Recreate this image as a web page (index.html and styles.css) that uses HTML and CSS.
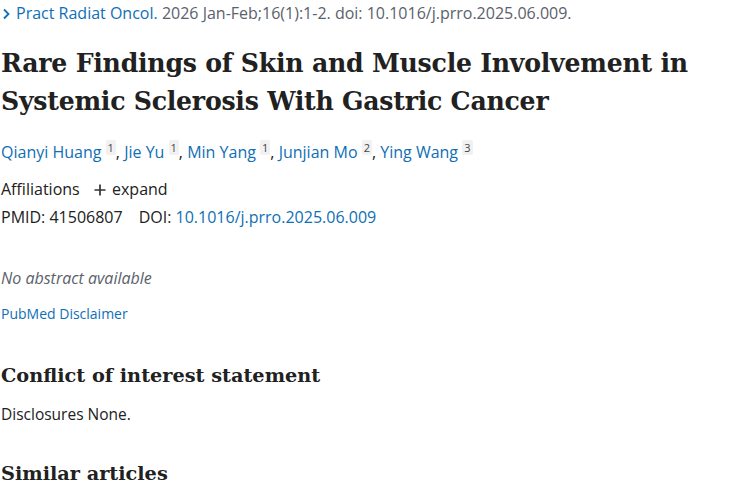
FILE: index.html
```html
<!DOCTYPE html>
<html>
<head>
<meta charset="utf-8">
<link rel="stylesheet" href="styles.css">
</head>
<body>
<main class="article">
  <div class="cite"><svg class="chev" width="9" height="12" viewBox="0 0 9 12"><path d="M2 1.5 L6.5 6 L2 10.5" fill="none" stroke="#0f6fb5" stroke-width="1.8"/></svg><a class="link" href="#">Pract Radiat Oncol.</a> 2026 Jan-Feb;16(1):1-2. doi: 10.1016/j.prro.2025.06.009.</div>
  <h1 class="title">Rare Findings of Skin and Muscle Involvement in Systemic Sclerosis With Gastric Cancer</h1>
  <div class="authors">
    <a class="link" href="#">Qianyi Huang</a> <sup class="aff">1</sup>, <a class="link" href="#">Jie Yu</a> <sup class="aff">1</sup>, <a class="link" href="#">Min Yang</a> <sup class="aff">1</sup>, <a class="link" href="#">Junjian Mo</a> <sup class="aff">2</sup>, <a class="link" href="#">Ying Wang</a> <sup class="aff">3</sup>
  </div>
  <div class="affil">Affiliations <span class="expand"><svg class="plus" width="12" height="12" viewBox="0 0 12 12"><path d="M6 0.5 V11.5 M0.5 6 H11.5" stroke="#333" stroke-width="1.7"/></svg> expand</span></div>
  <div class="ids"><span class="pmid">PMID: 41506807</span><span>DOI: <a class="link" href="#">10.1016/j.prro.2025.06.009</a></span></div>
  <p class="noabs">No abstract available</p>
  <a class="disclaimer" href="#">PubMed Disclaimer</a>
  <h2 class="section">Conflict of interest statement</h2>
  <p class="coi">Disclosures None.</p>
  <h2 class="section similar">Similar articles</h2>
</main>
</body>
</html>
```
FILE: styles.css
```css
html, body {
  margin: 0;
  padding: 0;
  background: #fff;
}
body {
  font-family: "Open Sans", "Noto Sans", sans-serif;
  color: #212121;
}
.article {
  padding: 0 0 0 1px;
}
.link {
  color: #0f6fb5;
  text-decoration: none;
}
.cite {
  font-size: 16px;
  color: #5b616b;
  line-height: 27px;
  white-space: nowrap;
}
.chev {
  margin: 0 5px 0 1px;
  vertical-align: -1px;
}
.title {
  font-family: "DejaVu Serif", serif;
  font-weight: bold;
  font-size: 25.2px;
  line-height: 38px;
  color: #212121;
  margin: 17px 0 0 0;
  letter-spacing: -0.25px;
}
.authors {
  margin-top: 20px;
  font-size: 16px;
  line-height: 24px;
}
.aff {
  font-size: 11px;
  color: #444;
  background: #f1f1f1;
  padding: 0 2px;
  border-radius: 2px;
  vertical-align: 6px;
  line-height: 1;
}
.affil {
  margin-top: 13px;
  font-size: 16px;
  line-height: 24px;
}
.expand {
  margin-left: 10px;
}
.plus {
  vertical-align: -1px;
  margin-right: 2px;
}
.ids {
  font-size: 16px;
  line-height: 24px;
  margin-top: 4px;
}
.pmid {
  margin-right: 16px;
}
.noabs {
  font-style: italic;
  color: #5b616b;
  font-size: 16px;
  margin: 37px 0 0 0;
  line-height: 24px;
}
.disclaimer {
  display: inline-block;
  font-size: 14px;
  color: #0f6fb5;
  text-decoration: none;
  margin-top: 14px;
  line-height: 20px;
}
.section {
  font-family: "DejaVu Serif", serif;
  font-weight: bold;
  font-size: 19.3px;
  line-height: 28px;
  margin: 38px 0 0 0;
}
.coi {
  font-size: 15.5px;
  margin: 12px 0 0 0;
  line-height: 24px;
}
.similar {
  margin-top: 34px;
}
```
